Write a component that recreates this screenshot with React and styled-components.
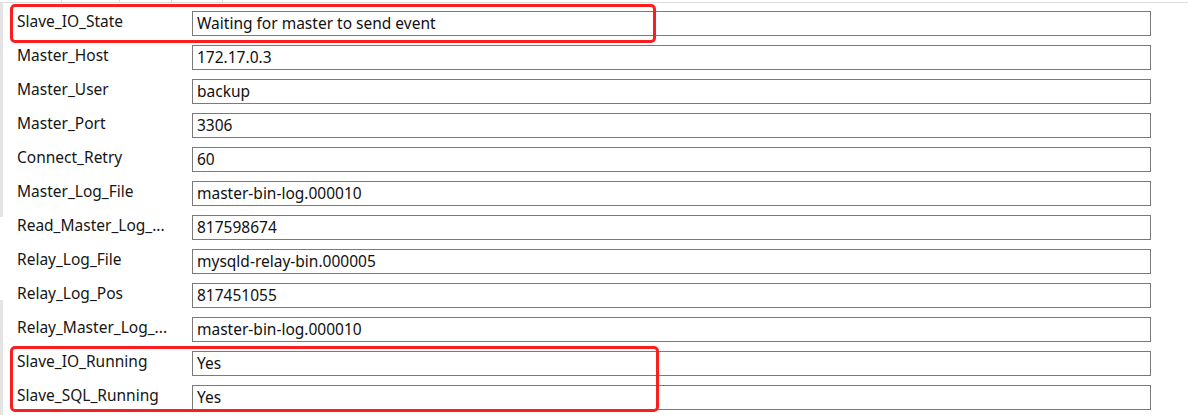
import React from 'react';
import styled, { createGlobalStyle } from 'styled-components';

const GlobalStyle = createGlobalStyle`
    html, body {
        margin: 0;
        padding: 0;
        background: #ffffff;
    }
    body {
        font-family: "Noto Sans", "Open Sans", "Liberation Sans", sans-serif;
        color: #1b1b1b;
    }
    *, *::before, *::after {
        box-sizing: border-box;
    }
`;

const rows = [
    ['Slave_IO_State', 'Waiting for master to send event'],
    ['Master_Host', '172.17.0.3'],
    ['Master_User', 'backup'],
    ['Master_Port', '3306'],
    ['Connect_Retry', '60'],
    ['Master_Log_File', 'master-bin-log.000010'],
    ['Read_Master_Log_...', '817598674'],
    ['Relay_Log_File', 'mysqld-relay-bin.000005'],
    ['Relay_Log_Pos', '817451055'],
    ['Relay_Master_Log_...', 'master-bin-log.000010'],
    ['Slave_IO_Running', 'Yes'],
    ['Slave_SQL_Running', 'Yes'],
];

class App extends React.Component {
    renderRow([label, value]) {
        return (
            <Row key={label}>
                <Label>{label}</Label>
                <Field>{value}</Field>
            </Row>
        );
    }

    render() {
        return (
            <Page>
                <GlobalStyle />
                <TabStrip>
                    <Tab width={62} />
                    <Tab width={58} />
                    <Tab width={52} />
                    <Tab width={51} />
                </TabStrip>
                <Body>
                    <Gutter>
                        <GutterPiece height={214} />
                        <GutterGap />
                        <GutterPiece height={115} />
                    </Gutter>
                    <List>
                        <Group>
                            {this.renderRow(rows[0])}
                            <Highlight width={646} top={-2} bottom={-3} />
                        </Group>
                        {rows.slice(1, 10).map((r) => this.renderRow(r))}
                        <Group>
                            {rows.slice(10).map((r) => this.renderRow(r))}
                            <Highlight width={649} top={0} bottom={2} />
                        </Group>
                    </List>
                </Body>
            </Page>
        );
    }
}

export default App;

const Page = styled.div`
    width: 1188px;
    height: 419px;
    overflow: hidden;
    background: #fff;
`;

const TabStrip = styled.div`
    display: flex;
    height: 3px;
    border-bottom: 1px solid #dcdcdc;
`;

const Tab = styled.div`
    width: ${(p) => p.width}px;
    height: 2px;
    border-right: 1px solid #dcdcdc;
`;

const Body = styled.div`
    display: flex;
`;

const Gutter = styled.div`
    width: 3px;
    display: flex;
    flex-direction: column;
`;

const GutterPiece = styled.div`
    height: ${(p) => p.height}px;
    background: #e4e4e4;
`;

const GutterGap = styled.div`
    height: 83px;
`;

const List = styled.div`
    flex: 1;
    padding: 3px 0 0 7px;
    display: flex;
    flex-direction: column;
`;

const Group = styled.div`
    position: relative;
`;

const Row = styled.div`
    display: grid;
    grid-template-columns: 182px 959px;
    height: 34px;
    align-items: start;
`;

const Label = styled.div`
    padding: 5px 0 0 7px;
    font-size: 15.5px;
    line-height: 20px;
    color: #161616;
    white-space: nowrap;
`;

const Field = styled.div`
    margin-top: 5px;
    height: 25px;
    border: 1px solid #7a7a7a;
    padding: 0 0 0 4px;
    font-size: 15.5px;
    line-height: 23px;
    color: #111;
    white-space: nowrap;
    overflow: hidden;
`;

const Highlight = styled.div`
    position: absolute;
    left: 0;
    top: ${(p) => p.top}px;
    bottom: ${(p) => p.bottom}px;
    width: ${(p) => p.width}px;
    border: 3px solid #fa1e1e;
    border-radius: 5px;
    pointer-events: none;
`;
